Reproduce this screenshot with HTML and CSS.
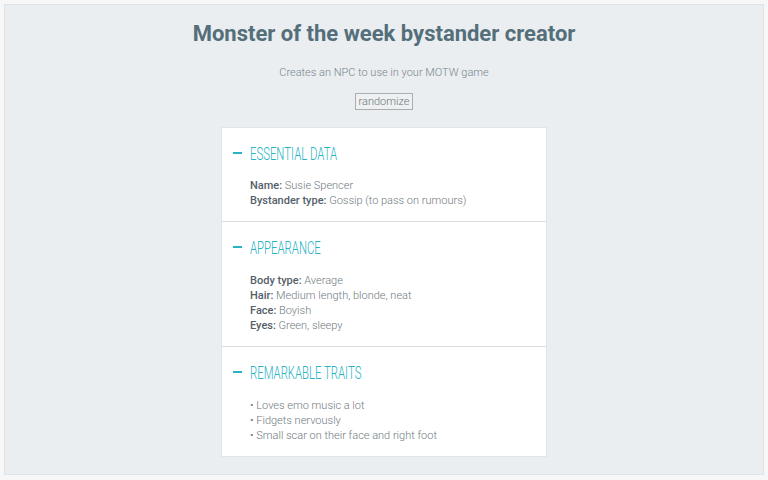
FILE: index.html
```html
<!DOCTYPE html>
<html>
<head>
<meta charset="utf-8">
<link rel="stylesheet" href="styles.css">
</head>
<body>
<div class="page">
  <h1 class="title">Monster of the week bystander creator</h1>
  <p class="subtitle">Creates an NPC to use in your MOTW game</p>
  <div class="actions"><button class="btn">randomize</button></div>
  <div class="card">
    <section class="section">
      <h2 class="sec-head"><span class="dash"></span><span class="sec-title">ESSENTIAL DATA</span></h2>
      <div class="sec-body">
        <div class="line"><b>Name:</b> Susie Spencer</div>
        <div class="line"><b>Bystander type:</b> Gossip (to pass on rumours)</div>
      </div>
    </section>
    <section class="section">
      <h2 class="sec-head"><span class="dash"></span><span class="sec-title">APPEARANCE</span></h2>
      <div class="sec-body">
        <div class="line"><b>Body type:</b> Average</div>
        <div class="line"><b>Hair:</b> Medium length, blonde, neat</div>
        <div class="line"><b>Face:</b> Boyish</div>
        <div class="line"><b>Eyes:</b> Green, sleepy</div>
      </div>
    </section>
    <section class="section">
      <h2 class="sec-head"><span class="dash"></span><span class="sec-title">REMARKABLE TRAITS</span></h2>
      <div class="sec-body">
        <div class="line">• Loves emo music a lot</div>
        <div class="line">• Fidgets nervously</div>
        <div class="line">• Small scar on their face and right foot</div>
      </div>
    </section>
  </div>
</div>
</body>
</html>
```

FILE: styles.css
```css
html, body {
  margin: 0;
  padding: 0;
  background: #f7f7f7;
  font-family: Roboto, "Liberation Sans", sans-serif;
}
.page {
  margin: 4px;
  height: 469px;
  border: 1px solid #dfe3e6;
  background: #eaeef1;
  display: flex;
  flex-direction: column;
  align-items: center;
}
.title {
  margin: 16px 0 0;
  font-size: 22px;
  line-height: 26px;
  font-weight: 700;
  color: #546e7a;
}
.subtitle {
  margin: 19px 0 0;
  font-size: 11px;
  line-height: 14px;
  font-weight: 300;
  color: #78848b;
}
.actions {
  margin-top: 10px;
}
.btn {
  font-family: Roboto, "Liberation Sans", sans-serif;
  font-size: 11px;
  font-weight: 300;
  color: #6b757b;
  background: #eef0f1;
  border: 1px solid #a9aeb1;
  padding: 1px 3px;
  line-height: 13px;
}
.card {
  margin-top: 18px;
  width: 324px;
  background: #fff;
  box-shadow: 0 0 0 1px #e2e6e9;
}
.section {
  padding: 15px 10px 13px 11px;
  border-bottom: 1px solid #dcdfe2;
}
.section:last-child {
  border-bottom: none;
}
.sec-head {
  margin: 0;
  display: flex;
  align-items: center;
  height: 20px;
  font-weight: 300;
}
.dash {
  width: 9px;
  height: 2px;
  background: #26b3c3;
  margin-right: 8px;
  flex: none;
}
.sec-title {
  display: inline-block;
  font-family: Roboto, "Liberation Sans", sans-serif;
  font-weight: 300;
  font-size: 18px;
  color: #26b3c3;
  transform: scaleX(0.63);
  transform-origin: left center;
  white-space: nowrap;
}
.sec-body {
  margin-top: 15px;
  padding-left: 17px;
}
.section + .section .sec-body {
  margin-top: 16px;
}
.line {
  font-size: 11px;
  line-height: 15px;
  font-weight: 300;
  color: #6f7a80;
}
.line b {
  font-weight: 500;
  color: #546069;
}
```
